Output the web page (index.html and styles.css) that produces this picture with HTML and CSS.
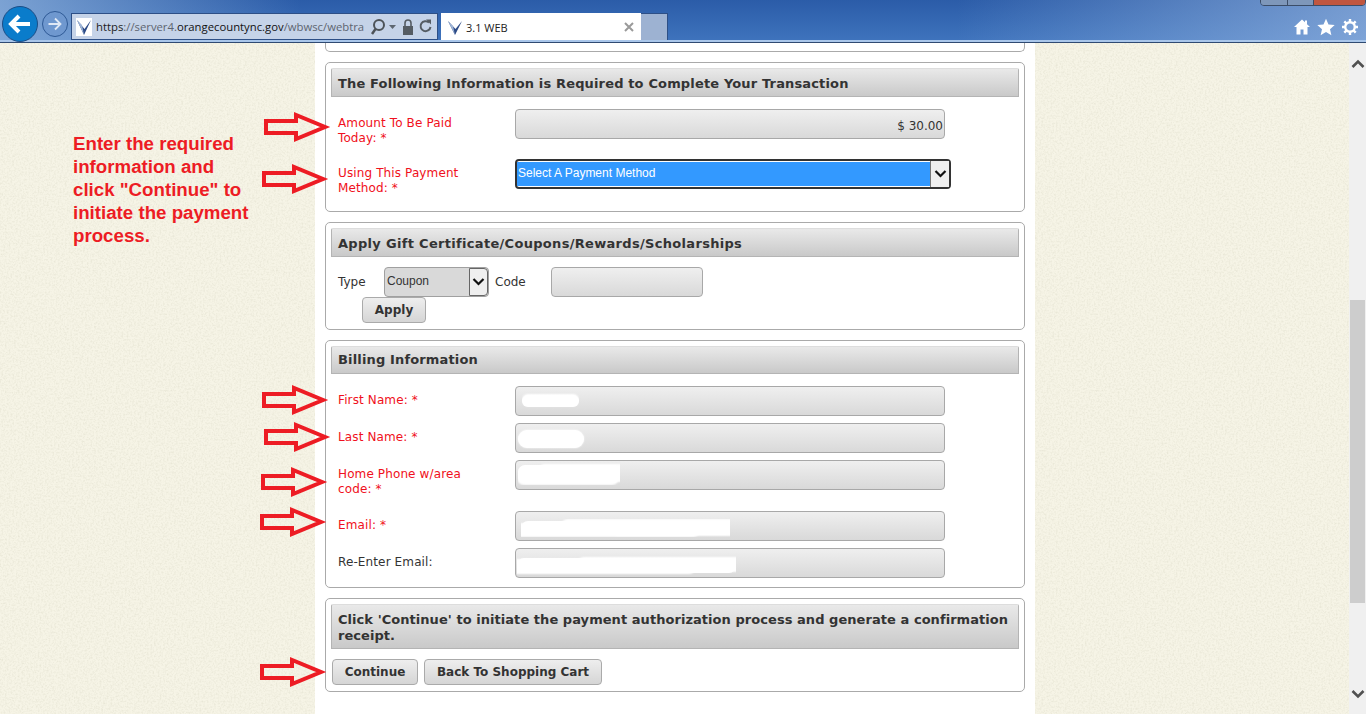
FILE: index.html
```html
<!DOCTYPE html>
<html lang="en">
<head>
<meta charset="utf-8">
<title>3.1 WEB</title>
<link rel="stylesheet" href="styles.css">
</head>
<body>
<div class="window">
  <header class="chrome">
    <div class="winctl"><span class="wc"></span><span class="wc"></span><span class="wc wc-close"></span></div>
    <div class="nav">
      <span class="back"><svg width="24" height="22" viewBox="0 0 24 22"><path d="M11 3 3 11l8 8M3.500 11H22" fill="none" stroke="#fff" stroke-width="4"/></svg></span>
      <span class="forward"><svg width="16" height="14" viewBox="0 0 16 14"><path d="M8 1.500 13.500 7 8 12.500M13 7H1.500" fill="none" stroke="#dfe8f5" stroke-width="1.800"/></svg></span>
    </div>
    <div class="address">
      <svg class="favicon" width="16" height="18" viewBox="0 0 16 18"><rect width="16" height="18" fill="#fff"/><path d="M1 2 8 17 15 2 8.500 11Z" fill="#2c4a86"/><path d="M1 2 8 17 6 7Z" fill="#9db4d6"/></svg>
      <span class="url"><span class="dim1">https</span><span class="dim">://server4.</span><span class="host">orangecountync.gov</span><span class="dim">/wbwsc/webtra</span></span>
      <svg class="addr-icons" width="66" height="20" viewBox="0 0 66 20">
        <circle cx="10" cy="8" r="5" fill="none" stroke="#4d5358" stroke-width="2"/><path d="M6.500 12 3 17" stroke="#4d5358" stroke-width="2.500"/>
        <path d="M20 8h7l-3.500 4z" fill="#5d6670"/>
        <rect x="34" y="9" width="10" height="9" fill="#555c63"/><path d="M36 9V6a3 3 0 0 1 6 0v3" fill="none" stroke="#555c63" stroke-width="1.600"/>
        <path d="M60 5.500a5 5 0 1 0 1.500 4.500" fill="none" stroke="#555c63" stroke-width="2"/><path d="M57 2.500h5v5z" fill="#555c63"/>
      </svg>
    </div>
    <div class="tab">
      <svg width="16" height="16" viewBox="0 0 16 16"><path d="M1 2 8 16 15 2 8.500 10Z" fill="#2c4a86"/><path d="M1 2 8 16 6 7Z" fill="#9db4d6"/></svg>
      <span class="tab-title">3.1 WEB</span>
      <svg class="tab-x" width="10" height="10" viewBox="0 0 10 10"><path d="M1 1l8 8M9 1 1 9" stroke="#9a9a9a" stroke-width="2"/></svg>
    </div>
    <div class="newtab"></div>
    <div class="tools">
      <svg width="18" height="18" viewBox="0 0 18 18"><path d="M9 1.500 1 9h2.500v7.500h4v-5h3v5h4V9H17l-3-2.800V2.500h-2v1.800z" fill="#fff"/></svg>
      <svg width="18" height="18" viewBox="0 0 18 18"><path d="m9 .8 2.500 5.700 6.200.6-4.700 4.100 1.400 6L9 14.100l-5.400 3.100 1.400-6L.3 7.100l6.200-.6z" fill="#fff"/></svg>
      <svg width="18" height="18" viewBox="0 0 18 18"><circle cx="9" cy="9" r="4.800" fill="none" stroke="#fff" stroke-width="2.400"/><path d="M9 1v3.500M9 13.500V17M1 9h3.500M13.500 9H17M3.300 3.300l2.500 2.500M12.200 12.200l2.500 2.500M14.700 3.300l-2.500 2.500M5.800 12.200l-2.500 2.500" stroke="#fff" stroke-width="2.400"/></svg>
    </div>
  </header>

  <div class="viewport">
    <main class="page">
      <svg class="texture" aria-hidden="true"><filter id="paper"><feTurbulence type="fractalNoise" baseFrequency="0.55" numOctaves="3" seed="4"/><feColorMatrix values="0 0 0 0 0.5  0 0 0 0 0.49  0 0 0 0 0.36  0 0 0 0.45 -0.18"/></filter><rect width="100%" height="100%" filter="url(#paper)"/></svg>
      <div class="column">
        <section class="panel panel-cut"></section>

        <section class="panel panel-pay">
          <h2 class="panel-head">The Following Information is Required to Complete Your Transaction</h2>
          <div class="rows">
            <div class="row">
              <label class="lbl req">Amount To Be Paid<br>Today: *</label>
              <div class="field amount">$ 30.00</div>
            </div>
            <div class="row">
              <label class="lbl req">Using This Payment<br>Method: *</label>
              <div class="select-pay">
                <span class="select-pay-val">Select A Payment Method</span>
                <span class="select-btn"><svg width="13" height="8" viewBox="0 0 13 8"><path d="M1.500 1 6.500 6l5-5" fill="none" stroke="#111" stroke-width="2.200"/></svg></span>
              </div>
            </div>
          </div>
        </section>

        <section class="panel panel-gift">
          <h2 class="panel-head">Apply Gift Certificate/Coupons/Rewards/Scholarships</h2>
          <div class="gift-row">
            <span class="gift-lbl">Type</span>
            <div class="select-coupon">
              <span class="select-coupon-val">Coupon</span>
              <span class="select-btn"><svg width="13" height="8" viewBox="0 0 13 8"><path d="M1.500 1 6.500 6l5-5" fill="none" stroke="#111" stroke-width="2.200"/></svg></span>
            </div>
            <span class="gift-lbl gift-code">Code</span>
            <div class="field field-code"></div>
          </div>
          <button class="btn btn-apply" type="button">Apply</button>
        </section>

        <section class="panel panel-bill">
          <h2 class="panel-head">Billing Information</h2>
          <div class="rows">
            <div class="row">
              <label class="lbl req">First Name: *</label>
              <div class="field"><span class="redact r-first"></span></div>
            </div>
            <div class="row">
              <label class="lbl req">Last Name: *</label>
              <div class="field"><span class="redact r-last"></span></div>
            </div>
            <div class="row row-tall">
              <label class="lbl req">Home Phone w/area<br>code: *</label>
              <div class="field"><span class="redact r-phone"></span></div>
            </div>
            <div class="row">
              <label class="lbl req">Email: *</label>
              <div class="field"><span class="redact r-email"></span></div>
            </div>
            <div class="row">
              <label class="lbl">Re-Enter Email:</label>
              <div class="field"><span class="redact r-email2"></span></div>
            </div>
          </div>
        </section>

        <section class="panel panel-go">
          <h2 class="panel-head">Click 'Continue' to initiate the payment authorization process and generate a confirmation receipt.</h2>
          <div class="actions">
            <button class="btn btn-continue" type="button">Continue</button>
            <button class="btn btn-cart" type="button">Back To Shopping Cart</button>
          </div>
        </section>
      </div>

      <p class="note">Enter the required<br>information and<br>click "Continue" to<br>initiate the payment<br>process.</p>
    </main>

    <aside class="scrollbar">
      <svg class="sb-arrow" width="14" height="10" viewBox="0 0 14 10"><path d="M1.500 8 7 2.500 12.500 8" fill="none" stroke="#505050" stroke-width="2.600"/></svg>
      <div class="sb-track"><div class="sb-thumb"></div></div>
      <svg class="sb-arrow" width="14" height="10" viewBox="0 0 14 10"><path d="M1.500 2 7 7.500 12.500 2" fill="none" stroke="#505050" stroke-width="2.600"/></svg>
    </aside>
  </div>

  <svg class="callouts" width="1366" height="714" viewBox="0 0 1366 714" aria-hidden="true">
    <defs><path id="arrow" d="M0 -6H30V-12L59 0 30 12V6H0Z" fill="none" stroke="#ed1c24" stroke-width="4"/></defs>
    <use href="#arrow" x="266" y="127"/>
    <use href="#arrow" x="264" y="179"/>
    <use href="#arrow" x="264" y="400"/>
    <use href="#arrow" x="266" y="437"/>
    <use href="#arrow" x="263" y="482"/>
    <use href="#arrow" x="262" y="522"/>
    <use href="#arrow" x="262" y="672"/>
  </svg>
</div>
</body>
</html>
```

FILE: styles.css
```css
* { box-sizing: border-box; }
html, body { margin: 0; padding: 0; overflow: hidden; }
.window { position: relative; width: 1366px; height: 714px; display: flex; flex-direction: column; overflow: hidden; font-family: "DejaVu Sans", sans-serif; }

/* browser chrome */
.chrome { position: relative; flex: 0 0 43px; display: flex; align-items: flex-end; padding-bottom: 2px; border-bottom: 1px solid #2f4a72; box-shadow: inset 0 -2px 0 #a9c6ea;
  background: linear-gradient(90deg, rgba(150,185,225,.75) 0, rgba(150,185,225,0) 22%, rgba(150,185,225,0) 70%, rgba(160,190,230,.65) 100%), linear-gradient(180deg, #2b5ca8 0, #3f74bd 100%); }
.winctl { position: absolute; top: -1px; right: 0; width: 106px; height: 7px; display: flex; border: 1px solid #3b4d68; border-radius: 0 0 4px 4px; overflow: hidden; }
.wc { flex: 1; background: #7e97ba; border-right: 1px solid #3b4d68; }
.wc-close { flex: 0 0 51px; background: #c0563f; border-right: 0; }
.nav { position: absolute; left: 2px; top: 6px; display: flex; align-items: center; gap: 4px; }
.back { width: 36px; height: 36px; border-radius: 50%; background: #0a7ccb; border: 1px solid #1c4d86; display: flex; align-items: center; justify-content: center; }
.forward { width: 26px; height: 26px; border-radius: 50%; background: #6f98cf; border: 1px solid #2f5a96; display: flex; align-items: center; justify-content: center; }
.address { margin: 0 0 0 71px; width: 367px; height: 27px; display: flex; align-items: center; background: #c5d3e8; border: 1px solid #2d4f86; padding-left: 4px; }
.favicon { flex: none; margin-right: 4px; }
.url { font: 11.300px/1 "Open Sans", sans-serif; width: 270px; white-space: nowrap; color: #111; }
.dim { color: #5d6570; }
.dim1 { color: #222; }
.host { color: #111; }
.addr-icons { margin-left: 3px; flex: none; }
.tab { margin-left: 3px; width: 200px; height: 27px; background: #fff; display: flex; align-items: center; padding: 0 3px 0 6px; }
.tab-title { margin-left: 3px; padding-top: 2px; flex: 1; font: 11px/1 "Open Sans", sans-serif; color: #222; }
.tab-x { margin-right: 4px; }
.newtab { width: 27px; height: 27px; background: #9db2d2; border: 1px solid #2d4f86; border-left: 0; border-bottom: 0; }
.tools { position: absolute; right: 7px; top: 18px; display: flex; gap: 6px; }

/* page */
.viewport { flex: 1; display: flex; min-height: 0; }
.page { position: relative; flex: 1; display: flex; justify-content: center; background: #f6f4e6; overflow: hidden; padding-left: 1px; }
.texture { position: absolute; inset: 0; width: 100%; height: 100%; }
.column { position: relative; width: 720px; height: 100%; background: #fff; padding: 0 10px; display: flex; flex-direction: column; gap: 10px; }
.panel { flex: none; background: #fff; border: 1px solid #aaa; border-radius: 5px; padding: 5px; color: #333; }
.panel-cut { height: 9px; padding: 0; border-top: 0; border-radius: 0 0 5px 5px; }
.panel-head { margin: 0; padding: 7px 0 4px 6px; border: 1px solid #b4b4b4; border-top-color: #ddd; background: linear-gradient(180deg, #e9e9e9 0, #c9c9c9 100%); font: bold 13px/16px "DejaVu Sans", sans-serif; letter-spacing: .15px; color: #333; border-radius: 2px 2px 0 0; }
.panel-gift .panel-head { letter-spacing: .31px; }
.panel-bill .panel-head { padding-top: 5px; padding-bottom: 5px; }
.panel-go .panel-head { letter-spacing: .05px; }
.rows { padding: 12px 0 0 7px; display: flex; flex-direction: column; gap: 7px; }
.row { display: grid; grid-template-columns: 177px 430px; align-items: start; }
.lbl { display: block; font: 12px/15px "DejaVu Sans", sans-serif; letter-spacing: .12px; padding: 7px 0 6px; color: #333; }
.req { color: #f01020; }
.row-tall .lbl { padding-bottom: 7px; }
.field { position: relative; height: 30px; border: 1px solid #a8a8a8; border-radius: 4px; background: linear-gradient(180deg, #efefef 0, #d9d9d9 100%); font: 12px/28px "DejaVu Sans", sans-serif; color: #333; }
.amount { text-align: right; padding-right: 1px; padding-top: 2px; }
.redact { position: absolute; background: #fff; border-radius: 7px; }
.r-first { left: 6px; width: 57px; top: 8px; height: 12px; box-shadow: 0 -1px 2px #fff; clip-path: inset(-2px 0); }
.r-last { left: 2px; width: 66px; top: 6px; height: 18px; border-radius: 9px; box-shadow: 0 0 2px #fff; }
.r-phone { left: 2px; width: 102px; top: 4px; height: 18px; box-shadow: -1px 2px 2px #fff, 20px -1px 2px #fff; clip-path: inset(-2px 0); }
.r-email { left: 5px; width: 209px; top: 9px; height: 14px; box-shadow: 40px -2px 2px #fff, 90px 1px 2px #fff, -30px 2px 2px #fff; clip-path: inset(-2px 0); }
.r-email2 { left: 1px; width: 219px; top: 9px; height: 15px; box-shadow: 60px -1px 2px #fff, -40px 1px 2px #fff; clip-path: inset(-2px 0); }
.select-pay { display: flex; width: 436px; height: 30px; border: 2px solid #333; border-radius: 4px; background: #fff; }
.select-pay-val { flex: 1; background: #39f; margin: 1px 0; color: #fff; font: 12px/22px "Liberation Sans", sans-serif; padding-left: 1px; }
.select-btn { flex: 0 0 19px; display: flex; align-items: center; justify-content: center; background: #efefef; border-left: 1px solid #777; }
.panel-pay { height: 150px; }
.panel-gift { height: 108px; }
.gift-row { display: flex; align-items: flex-start; padding: 10px 0 0 7px; }
.gift-lbl { font: 12px/30px "DejaVu Sans", sans-serif; color: #333; width: 46px; }
.gift-code { width: 56px; margin-left: 6px; }
.select-coupon { display: flex; width: 105px; height: 30px; border: 1px solid #a0a0a0; border-radius: 4px; background: #d9d9d9; overflow: hidden; }
.select-coupon-val { flex: 1; font: 12px/26px "Liberation Sans", sans-serif; padding-left: 2px; color: #333; }
.select-coupon .select-btn { border: 1px solid #666; border-radius: 0 4px 4px 0; }
.field-code { width: 152px; }
.btn { height: 26px; border: 1px solid #aaa; border-radius: 4px; background: linear-gradient(180deg, #eee 0, #d5d5d5 100%); font: bold 12px/1 "DejaVu Sans", sans-serif; color: #333; padding: 0; cursor: pointer; }
.btn-apply { display: block; width: 64px; margin-left: 31px; }
.panel-bill { height: 248px; }
.panel-go { height: 94px; }
.actions { display: flex; gap: 6px; padding: 10px 0 0 1px; }
.btn-continue { width: 86px; }
.btn-cart { width: 178px; }
.note { position: absolute; left: 73px; top: 89px; margin: 0; font: bold 18.700px/23px "Liberation Sans", sans-serif; color: #ed1c24; }

/* scrollbar */
.scrollbar { flex: 0 0 17px; background: #f0f0f0; display: flex; flex-direction: column; align-items: center; }
.sb-arrow { flex: none; margin: 16px 0 0; }
.sb-arrow:last-child { margin: 0 0 15px; }
.sb-track { flex: 1; width: 100%; padding: 231px 1px 0 1px; }
.sb-thumb { height: 303px; background: #cdcdcd; }

.callouts { position: absolute; left: 0; top: 0; pointer-events: none; }
```
